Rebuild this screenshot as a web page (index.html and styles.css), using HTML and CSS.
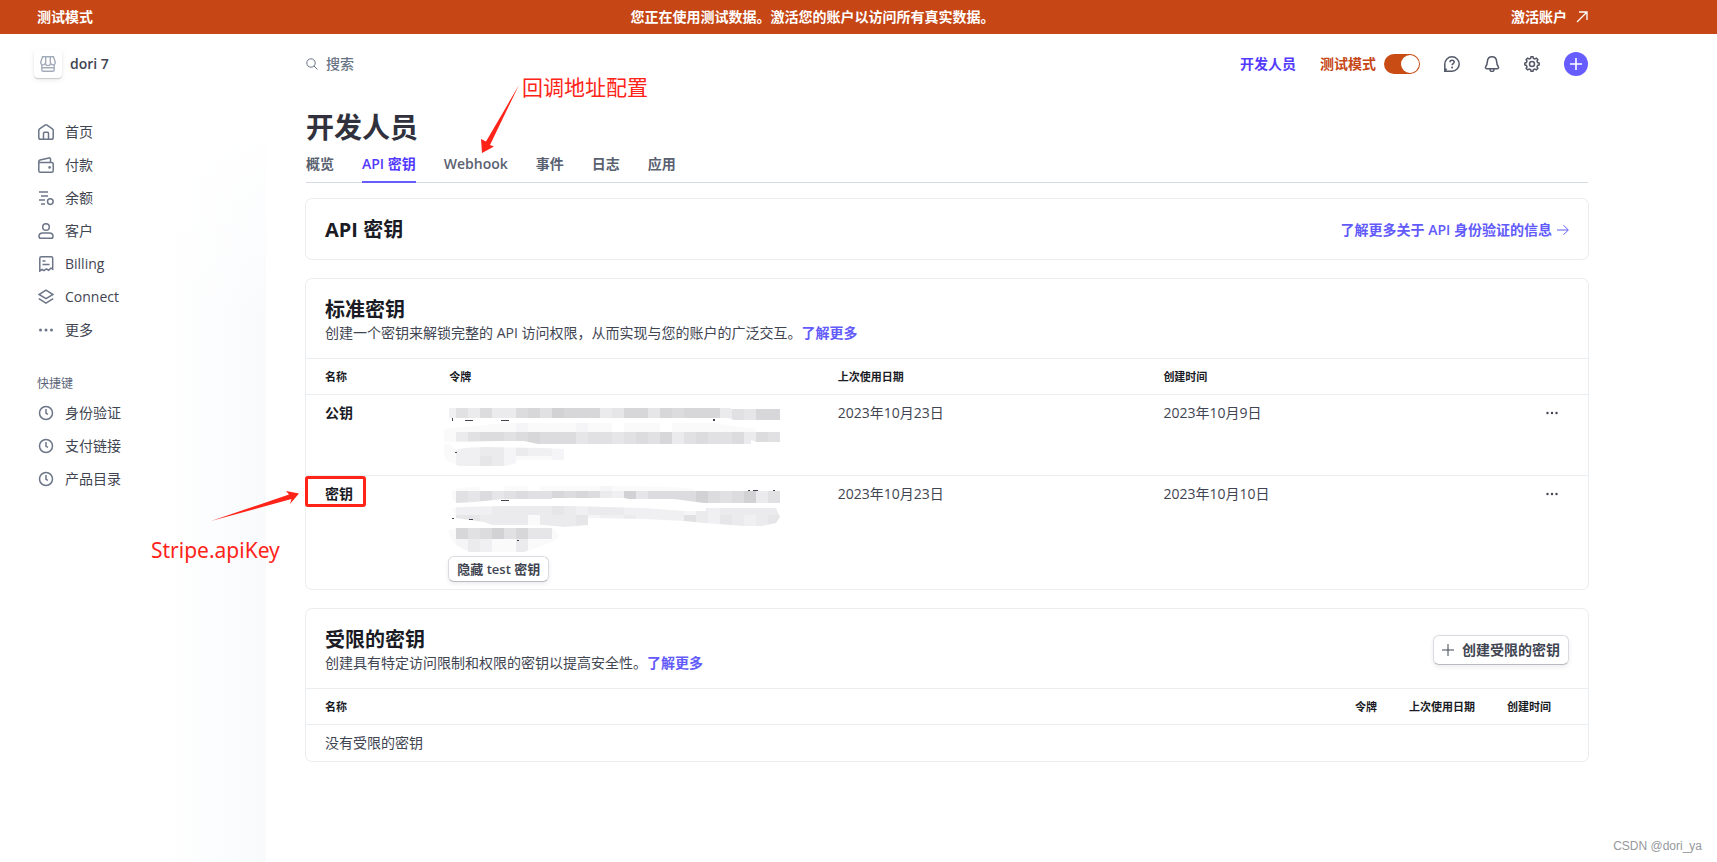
FILE: index.html
```html
<!DOCTYPE html>
<html lang="zh-CN">
<head>
    <meta charset="UTF-8">
    <title>开发人员</title>
    <link rel="stylesheet" href="styles.css">
</head>
<body>
    <div class="banner">
        <span>测试模式</span>
        <span>您正在使用测试数据。激活您的账户以访问所有真实数据。</span>
        <a href="#" class="banner-link">激活账户
            <svg width="12" height="12" viewBox="0 0 12 12"><path d="M1 11L11 1M3 1h8v8"/></svg>
        </a>
    </div>

    <div class="layout">
        <aside class="sidebar">
            <a href="#" class="account">
                <span class="account-logo">
                    <svg width="16" height="16" viewBox="0 0 16 16"><path d="M2.5.8h11l1.700 5.200a2.200 2.200 0 0 1-4.600 1 2.600 2.600 0 0 1-5.200 0A2.200 2.200 0 0 1 .8 6zM5.700 1v6M10.300 1v6M1.800 8.500v5.200c0 .9.6 1.500 1.500 1.500h9.400c.9 0 1.500-.6 1.500-1.500V8.500M2 11.800h12"/></svg>
                </span>
                dori 7
            </a>
            <nav class="menu">
                <a href="#"><svg width="16" height="16" viewBox="0 0 16 16"><path d="M.8 6.200c0-.6.3-1 .8-1.400L7 1.100c.6-.4 1.400-.4 2 0l5.400 3.700c.5.4.8.8.8 1.400v7.200c0 1-.8 1.800-1.800 1.800H2.600c-1 0-1.800-.8-1.800-1.800zM5.500 15V9.200c0-.6.400-1 1-1h3c.6 0 1 .4 1 1V15"/></svg>首页</a>
                <a href="#"><svg width="16" height="16" viewBox="0 0 16 16"><path d="M.8 5.500h12.900c.8 0 1.500.7 1.500 1.500v6.700c0 .8-.7 1.500-1.500 1.500H2.300c-.8 0-1.500-.7-1.500-1.500V4.500c0-.8.4-1.300 1.200-1.500L11 .9c.8-.2 1.500.3 1.500 1.100v3.300"/><circle class="dot" cx="11.600" cy="10.400" r="1.300"/></svg>付款</a>
                <a href="#"><svg width="16" height="16" viewBox="0 0 16 16"><path d="M1 2h9M3 6h7M1 10h6M3 14h4"/><circle cx="12.300" cy="11.600" r="2.800"/></svg>余额</a>
                <a href="#"><svg width="16" height="16" viewBox="0 0 16 16"><circle cx="8" cy="4" r="3.300"/><path d="M1 13.400c0-2 1.600-3.400 3.600-3.400h6.800c2 0 3.600 1.400 3.600 3.400 0 1-.8 1.800-1.800 1.800H2.800C1.800 15.200 1 14.400 1 13.400z"/></svg>客户</a>
                <a href="#"><svg width="16" height="16" viewBox="0 0 16 16"><path d="M1.800 15V2.300c0-.9.6-1.500 1.500-1.500h9.900c.9 0 1.500.6 1.500 1.500v10.900l-1.900-1-2.200 2-2.300-1.400-2.300 1.900-1.900-1.200zM4.500 5h3M4.500 8.500h7"/></svg>Billing</a>
                <a href="#"><svg width="16" height="16" viewBox="0 0 16 16"><path d="M8 1.200l7 4.300-7 4.200-7-4.200zM.8 9.600L8 14.200l7.200-4.600"/></svg>Connect</a>
                <a href="#"><svg width="16" height="16" viewBox="0 0 16 16"><circle class="dot" cx="2.500" cy="8" r="1.500"/><circle class="dot" cx="8" cy="8" r="1.500"/><circle class="dot" cx="13.500" cy="8" r="1.500"/></svg>更多</a>
            </nav>
            <h3 class="menu-title">快捷键</h3>
            <nav class="menu">
                <a href="#"><svg width="16" height="16" viewBox="0 0 16 16"><circle cx="8" cy="8" r="6.500"/><path d="M8 4v4.300l2 1"/></svg>身份验证</a>
                <a href="#"><svg width="16" height="16" viewBox="0 0 16 16"><circle cx="8" cy="8" r="6.500"/><path d="M8 4v4.300l2 1"/></svg>支付链接</a>
                <a href="#"><svg width="16" height="16" viewBox="0 0 16 16"><circle cx="8" cy="8" r="6.500"/><path d="M8 4v4.300l2 1"/></svg>产品目录</a>
            </nav>
        </aside>

        <main class="main">
            <header class="topbar">
                <label class="search">
                    <svg width="12" height="12" viewBox="0 0 12 12"><circle cx="5" cy="5" r="4.200"/><path d="M8 8l3.500 3.500"/></svg>
                    <input type="search" placeholder="搜索" aria-label="搜索">
                </label>
                <div class="tools">
                    <a href="#" class="dev-link">开发人员</a>
                    <label class="test-mode">测试模式 <input type="checkbox" class="toggle" checked></label>
                    <button type="button" class="icon-btn" aria-label="帮助"><svg width="16" height="16" viewBox="0 0 16 16"><path d="M.8 15.200V8A7.200 7.200 0 1 1 8 15.200H.8l1.800-2.600"/><path d="M6 6.200C6 5 6.900 4.200 8.100 4.200s2.100.7 2.100 1.800c0 1.500-2.100 1.600-2.100 3.200"/><circle class="dot" cx="8.100" cy="11.600" r="1"/></svg></button>
                    <button type="button" class="icon-btn" aria-label="通知"><svg width="16" height="16" viewBox="0 0 16 16"><path d="M8 .8c-2.700 0-4.400 2-4.600 4.600-.2 3-.8 4.200-1.700 5.400-.5.8-.2 1.900.9 1.900h10.800c1.100 0 1.400-1.100.9-1.900-.9-1.200-1.500-2.400-1.700-5.400C12.400 2.800 10.700.8 8 .8zM6 13.400a2 2 0 0 0 4 0"/></svg></button>
                    <button type="button" class="icon-btn" aria-label="设置"><svg width="16" height="16" viewBox="0 0 16 16"><path d="M6.600 2.400L7 .8h2l.4 1.600 1.500.6 1.500-.9 1.500 1.500-.9 1.500.6 1.500 1.600.4v2l-1.600.4-.6 1.500.9 1.500-1.500 1.500-1.500-.9-1.500.6-.4 1.600H7l-.4-1.600-1.500-.6-1.500.9-1.500-1.500.9-1.500-.6-1.500L.8 9V7l1.600-.4.6-1.500-.9-1.500 1.500-1.500 1.500.9z"/><circle cx="8" cy="8" r="2.500"/></svg></button>
                    <button type="button" class="add-btn" aria-label="新建"><svg width="12" height="12" viewBox="0 0 12 12"><path d="M6 0v12M0 6h12"/></svg></button>
                </div>
            </header>

            <h1>开发人员</h1>
            <nav class="tabs">
                <a href="#">概览</a>
                <a href="#" class="active">API 密钥</a>
                <a href="#">Webhook</a>
                <a href="#">事件</a>
                <a href="#">日志</a>
                <a href="#">应用</a>
            </nav>

            <section class="card card-title">
                <h2>API 密钥</h2>
                <a href="#" class="link">了解更多关于 API 身份验证的信息
                    <svg width="12" height="12" viewBox="0 0 12 12"><path d="M0 6h11M6.500 1.200L11.300 6l-4.800 4.800"/></svg>
                </a>
            </section>

            <section class="card">
                <div class="card-head">
                    <div>
                        <h2>标准密钥</h2>
                        <p>创建一个密钥来解锁完整的 API 访问权限，从而实现与您的账户的广泛交互。<a href="#" class="link">了解更多</a></p>
                    </div>
                </div>
                <table class="keys">
                    <colgroup>
                        <col class="col-name">
                        <col class="col-token">
                        <col class="col-used">
                        <col>
                        <col class="col-menu">
                    </colgroup>
                    <thead>
                        <tr><th>名称</th><th>令牌</th><th>上次使用日期</th><th>创建时间</th><th></th></tr>
                    </thead>
                    <tbody>
                        <tr>
                            <td class="name">公钥</td>
                            <td class="token"><svg id="publicKey" class="mosaic" width="336" height="64" viewBox="0 0 336 64" aria-hidden="true">
                                <clipPath id="p1"><path d="M5 4H287V5H336V16H290L284 14H5z"/></clipPath>
                                <clipPath id="p2"><path d="M0 25L20 23L60 19H270L312 25V28H0z"/></clipPath>
                                <clipPath id="p3"><path d="M0 28H336V38H312L307 36V40H94L80 37H56L0 38z"/></clipPath>
                                <clipPath id="p4"><path d="M0 40L5 39L12 46L20 44L40 43L100 44L120 45V56H72V59L62 62H15L5 58L0 52z"/></clipPath>
                            </svg></td>
                            <td>2023年10月23日</td>
                            <td>2023年10月9日</td>
                            <td class="more"><button type="button" class="more-btn" aria-label="更多"><svg width="12" height="12" viewBox="0 0 12 12"><circle cx="1.500" cy="6" r="1.200"/><circle cx="6" cy="6" r="1.200"/><circle cx="10.500" cy="6" r="1.200"/></svg></button></td>
                        </tr>
                        <tr>
                            <td class="name"><span class="marked">密钥</span></td>
                            <td class="token"><svg id="secretKey" class="mosaic" width="336" height="68" viewBox="0 0 336 68" aria-hidden="true">
                                <clipPath id="s1"><path d="M9 3L60 1H165L230 2L250 4V6H9z"/></clipPath>
                                <clipPath id="s2"><path d="M8 6H336V18H260L230 14H185L180 13H108V14H60L30 17L12 18L8 14z"/></clipPath>
                                <clipPath id="s3"><path d="M8 24L14 22L60 21H125L200 23L240 26H262V23H332L336 32L332 38L318 41H300L260 38L240 36L200 34L144 33V40L120 42L100 40L48 40L40 37L12 33z"/></clipPath>
                                <clipPath id="s4"><path d="M4 46L12 43H108L112 46L115 52L108 57L95 62L80 67H25L12 60L7 54z"/></clipPath>
                            </svg>
                                <button type="button" class="btn btn-small">隐藏 test 密钥</button></td>
                            <td>2023年10月23日</td>
                            <td>2023年10月10日</td>
                            <td class="more"><button type="button" class="more-btn" aria-label="更多"><svg width="12" height="12" viewBox="0 0 12 12"><circle cx="1.500" cy="6" r="1.200"/><circle cx="6" cy="6" r="1.200"/><circle cx="10.500" cy="6" r="1.200"/></svg></button></td>
                        </tr>
                    </tbody>
                </table>
            </section>

            <section class="card">
                <div class="card-head">
                    <div>
                        <h2>受限的密钥</h2>
                        <p>创建具有特定访问限制和权限的密钥以提高安全性。<a href="#" class="link">了解更多</a></p>
                    </div>
                    <button type="button" class="btn">
                        <svg width="12" height="12" viewBox="0 0 12 12"><path d="M6 0v12M0 6h12"/></svg>
                        创建受限的密钥
                    </button>
                </div>
                <table class="restricted">
                    <thead>
                        <tr><th class="wide">名称</th><th>令牌</th><th>上次使用日期</th><th>创建时间</th></tr>
                    </thead>
                    <tbody>
                        <tr><td colspan="4">没有受限的密钥</td></tr>
                    </tbody>
                </table>
            </section>
        </main>
    </div>

    <!-- notes drawn over the page -->
    <svg class="arrow" width="600" height="560" viewBox="0 0 600 560" aria-hidden="true">
        <path d="M519 85L490 145L494 146.500L482 153L481 139L486 141.500z"/>
        <path d="M211 521L289 494.500L286 491L299 493.500L290 504L291.500 499z"/>
    </svg>
    <span class="note note-webhook">回调地址配置</span>
    <span class="note note-key">Stripe.apiKey</span>
    <span class="watermark">CSDN @dori_ya</span>

    <script src="script.js"></script>
</body>
</html>
```
FILE: styles.css
```css
* {
    box-sizing: border-box;
}
body {
    margin: 0;
    position: relative;
    min-height: 100vh;
    display: flex;
    flex-direction: column;
    font-family: "Open Sans", "Noto Sans CJK SC", sans-serif;
    font-size: 14px;
    line-height: 20px;
    color: #414552;
    background-color: #fff;
}
a {
    color: inherit;
    text-decoration: none;
}
button, input {
    font: inherit;
    color: inherit;
    margin: 0;
}
button {
    cursor: pointer;
}
svg {
    fill: none;
    stroke: currentColor;
    flex: none;
}
h1, h2, h3, p {
    margin: 0;
}

/* banner */
.banner {
    display: grid;
    grid-template-columns: 1fr auto 1fr;
    align-items: center;
    height: 34px;
    padding: 0 129px 0 37px;
    background-color: #c64615;
    color: #fff;
    font-weight: 600;
}
.banner-link {
    display: flex;
    align-items: center;
    justify-content: flex-end;
    gap: 9px;
}
.banner-link svg {
    stroke-width: 1.3;
}

.layout {
    display: flex;
    flex: 1;
}

/* sidebar */
.sidebar {
    width: 266px;
    flex: none;
    padding: 16px 34px;
    background: linear-gradient(to bottom, #fff 90px, rgba(255, 255, 255, 0) 300px), linear-gradient(to right, #fff 165px, #f8fafc);
}
.account {
    display: flex;
    align-items: center;
    gap: 8px;
    font-weight: 600;
}
.account-logo {
    display: flex;
    align-items: center;
    justify-content: center;
    width: 28px;
    height: 28px;
    border-radius: 4px;
    color: #a3acba;
    background-color: #fff;
    box-shadow: 0 1px 1px rgba(0, 0, 0, 0.18), 0 2px 5px rgba(64, 68, 82, 0.1);
}
.account-logo svg {
    stroke-width: 1.4;
}
.menu {
    margin-top: 37px;
    padding-left: 4px;
}
.menu a {
    display: flex;
    align-items: center;
    gap: 11px;
    height: 33px;
}
.menu svg {
    color: #6c7688;
    stroke-width: 1.5;
}
svg .dot {
    fill: currentColor;
    stroke: none;
}
.menu-title {
    margin-top: 28px;
    padding-left: 3px;
    font-size: 12px;
    font-weight: 400;
    color: #5a6478;
}
.menu-title + .menu {
    margin-top: 2px;
}

/* main column */
.main {
    flex: 1;
    min-width: 0;
    padding: 0 129px 60px 40px;
}
.topbar {
    display: flex;
    justify-content: space-between;
    align-items: center;
    height: 60px;
}
.search {
    display: flex;
    align-items: center;
    gap: 8px;
    color: #687385;
}
.search input {
    width: 200px;
    padding: 0;
    border: none;
    outline: none;
    background: none;
    font-weight: 500;
}
.search input::placeholder {
    color: #687385;
}
.tools {
    display: flex;
    align-items: center;
    gap: 24px;
    font-weight: 600;
}
.dev-link {
    color: #533afd;
}
.test-mode {
    display: flex;
    align-items: center;
    gap: 8px;
    color: #c64615;
}
.toggle {
    appearance: none;
    width: 36px;
    height: 20px;
    padding: 1px;
    border-radius: 10px;
    background-color: #c84c14;
    display: flex;
    justify-content: flex-end;
}
.toggle::before {
    content: "";
    width: 18px;
    height: 18px;
    border-radius: 50%;
    background-color: #fff;
}
.toggle:not(:checked) {
    justify-content: flex-start;
    background-color: #a3acba;
}
.icon-btn, .add-btn, .more-btn {
    display: flex;
    align-items: center;
    justify-content: center;
    padding: 0;
    border: none;
    background: none;
}
.icon-btn {
    width: 16px;
    height: 16px;
    color: #545969;
}
.icon-btn svg {
    stroke-width: 1.5;
}
.add-btn {
    width: 24px;
    height: 24px;
    border-radius: 50%;
    background-color: #675dff;
    color: #fff;
}
.add-btn svg {
    stroke-width: 1.6;
}
h1 {
    margin-top: 15px;
    font-size: 28px;
    line-height: 36px;
    font-weight: 700;
    color: #30313d;
}
.tabs {
    display: flex;
    gap: 28px;
    margin-top: 9px;
    border-bottom: 1px solid #d5dbe1;
    font-weight: 600;
    color: #596171;
}
.tabs a {
    padding-bottom: 7px;
    margin-bottom: -1px;
    border-bottom: 2px solid transparent;
}
.tabs .active {
    color: #533afd;
    border-color: #675dff;
}

/* cards */
.card {
    margin-top: 20px;
    border-radius: 6px;
    background-color: #fff;
    box-shadow: 0 0 0 1px #ebeef1;
}
.card-title {
    display: flex;
    justify-content: space-between;
    align-items: center;
    margin-top: 16px;
    padding: 18px 19px 16px;
}
h2 {
    font-size: 20px;
    line-height: 26px;
    font-weight: 700;
    color: #1a1b25;
}
.link {
    color: #625afa;
    font-weight: 600;
}
.card-title .link {
    display: flex;
    align-items: center;
    gap: 5px;
}
.card-head {
    display: flex;
    justify-content: space-between;
    align-items: center;
    padding: 18px 19px 15px;
    border-bottom: 1px solid #ebeef1;
}
.btn {
    display: flex;
    align-items: center;
    gap: 8px;
    height: 30px;
    padding: 0 8px;
    border: 1px solid #d8dbe0;
    border-bottom-color: #b8bbc2;
    border-radius: 6px;
    background-color: #fff;
    box-shadow: 0 2px 4px rgba(64, 68, 82, 0.1);
    font-weight: 600;
}
.btn-small {
    height: 26px;
    margin: 3px 0 0 4px;
    font-size: 13px;
}

/* tables */
table {
    width: 100%;
    border-spacing: 0;
}
th {
    height: 36px;
    padding: 0 10px;
    border-bottom: 1px solid #ebeef1;
    font-size: 11px;
    line-height: 16px;
    font-weight: 700;
    text-align: left;
    white-space: nowrap;
    color: #1a1b25;
}
td {
    padding: 8px 10px;
    vertical-align: top;
}
th:first-child, td:first-child {
    padding-left: 19px;
}
.keys {
    table-layout: fixed;
}
.keys tbody tr:first-child td {
    border-bottom: 1px solid #ebeef1;
}
.col-name {
    width: 10.400%;
}
.col-token {
    width: 30.300%;
}
.col-used {
    width: 25.400%;
}
.col-menu {
    width: 80px;
}
.keys .name {
    font-weight: 700;
    color: #1a1b25;
}
.keys .token {
    padding: 9px 4px 7px 5px;
}
.mosaic {
    display: block;
    shape-rendering: crispEdges;
    stroke: none;
}
.more-btn {
    width: 12px;
    height: 20px;
    margin: 0 20px 0 auto;
}
.more-btn svg {
    fill: currentColor;
    stroke: none;
}
.restricted th {
    padding: 0 16px;
}
.restricted th:first-child {
    padding-left: 19px;
}
.restricted th:last-child {
    padding-right: 37px;
}
.restricted .wide {
    width: 100%;
}

/* notes */
.marked {
    position: relative;
}
.marked::after {
    content: "";
    position: absolute;
    top: -8px;
    right: -13px;
    bottom: -4px;
    left: -20px;
    border: 3px solid #ff2318;
    border-radius: 3px;
}
.arrow {
    position: absolute;
    top: 0;
    left: 0;
    fill: #ff2318;
    stroke: none;
    pointer-events: none;
}
.note {
    position: absolute;
    font-family: "Noto Sans", "Noto Sans CJK SC", sans-serif;
    font-size: 21px;
    line-height: 28px;
    color: #ff2318;
}
.note-webhook {
    top: 73px;
    left: 522px;
}
.note-key {
    top: 536px;
    left: 151px;
}
.watermark {
    position: absolute;
    right: 15px;
    bottom: 7px;
    font-family: "Liberation Sans", Arial, sans-serif;
    font-size: 12px;
    line-height: 18px;
    color: #96989b;
}
```
FILE: script.js
```js
// Pixelated key values: one digit per 12px cell, 0 is white and 9 the darkest grey
const publicRows = [
    { y: 4, h: 12, clip: 'p1', cells: '3647447869888458858788846588' },
    { y: 19, h: 9, clip: 'p2', cells: '11111121111211011101111111' },
    { y: 28, h: 12, clip: 'p3', cells: '1467767877756656768467667476' },
    { y: 39, h: 13, clip: 'p4', cells: '1334424332' },
    { y: 52, h: 11, clip: 'p4', cells: '1335421112' }
];
const secretRows = [
    { y: 1, h: 5, clip: 's1', cells: '011001101111121111111' },
    { y: 6, h: 12, clip: 's2', cells: '1657567668787439577779767946' },
    { y: 21, h: 9, clip: 's3', cells: '1333444445434443333324344444' },
    { y: 30, h: 12, clip: 's3', cells: '1554444144452334333364354345' },
    { y: 43, h: 11, clip: 's4', cells: '1867968551' },
    { y: 54, h: 13, clip: 's4', cells: '1243114111' }
];
// bits of the text that stay visible: x, y, width, height
const publicMarks = [[8, 14, 1, 3], [21, 16, 8, 1], [57, 16, 8, 1], [269, 15, 2, 2], [11, 48, 2, 1]];
const secretMarks = [[57, 15, 8, 1], [304, 5, 2, 1], [309, 5, 5, 1], [329, 5, 2, 1], [8, 33, 2, 1], [25, 34, 4, 1], [73, 55, 2, 1]];

function addRect(svg, x, y, w, h, fill, clip) {
    const rect = document.createElementNS('http://www.w3.org/2000/svg', 'rect');
    rect.setAttribute('x', x);
    rect.setAttribute('y', y);
    rect.setAttribute('width', w);
    rect.setAttribute('height', h);
    rect.setAttribute('fill', fill);
    if (clip) rect.setAttribute('clip-path', 'url(#' + clip + ')');
    svg.appendChild(rect);
}

function drawMosaic(id, rows, marks) {
    const svg = document.getElementById(id);
    rows.forEach(row => {
        row.cells.split('').forEach((level, i) => {
            const c = 255 - level * 5;
            addRect(svg, i * 12, row.y, 12, row.h, `rgb(${c}, ${c}, ${c + (level > 1 ? 2 : 0)})`, row.clip);
        });
    });
    marks.forEach(m => addRect(svg, m[0], m[1], m[2], m[3], '#414552'));
}

drawMosaic('publicKey', publicRows, publicMarks);
drawMosaic('secretKey', secretRows, secretMarks);
```
